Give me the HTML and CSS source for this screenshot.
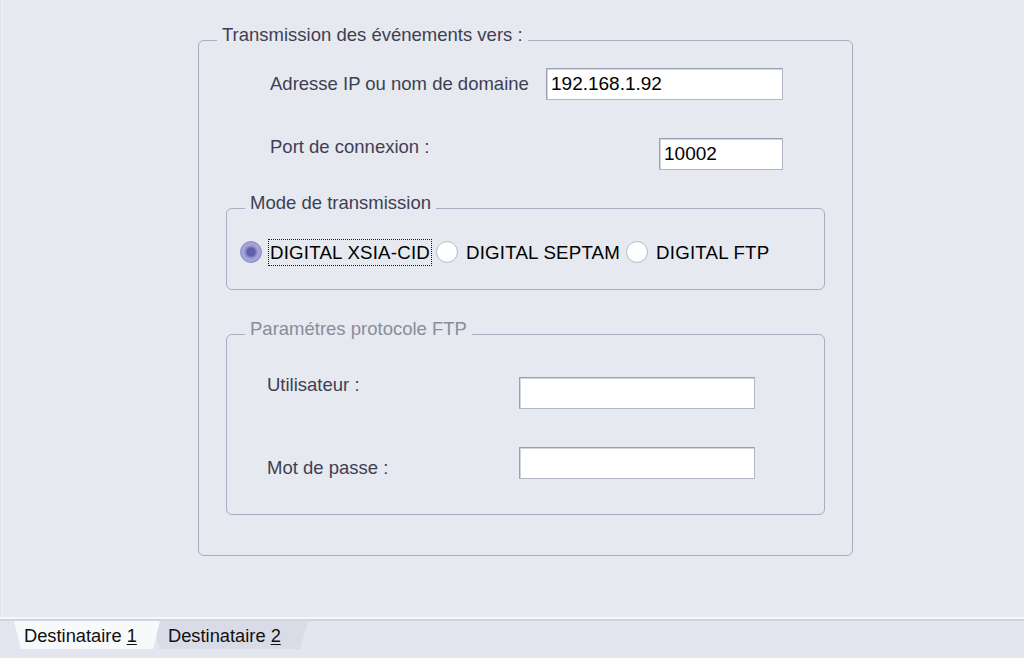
FILE: index.html
```html
<!DOCTYPE html>
<html lang="fr">
<head>
<meta charset="utf-8">
<title>Transmission</title>
<link rel="stylesheet" href="styles.css">
</head>
<body>
<div class="main">
  <fieldset class="group outer">
    <legend>Transmission des événements vers :</legend>
    <div class="row row-ip">
      <span class="label">Adresse IP ou nom de domaine</span>
      <input class="input wide" type="text" value="192.168.1.92">
    </div>
    <div class="row row-port">
      <span class="label lift">Port de connexion :</span>
      <input class="input narrow" type="text" value="10002">
    </div>

    <fieldset class="group mode">
      <legend>Mode de transmission</legend>
      <div class="radios">
        <span class="radio checked"></span><span class="rlabel focus">DIGITAL XSIA-CID</span>
        <span class="radio"></span><span class="rlabel">DIGITAL SEPTAM</span>
        <span class="radio"></span><span class="rlabel">DIGITAL FTP</span>
      </div>
    </fieldset>

    <fieldset class="group ftp">
      <legend class="disabled">Paramétres protocole FTP</legend>
      <div class="row row-user">
        <span class="label user-label">Utilisateur :</span>
        <input class="input ftp-input" type="text" value="">
      </div>
      <div class="row row-pass">
        <span class="label pass-label">Mot de passe :</span>
        <input class="input ftp-input" type="text" value="">
      </div>
    </fieldset>
  </fieldset>
</div>
<div class="tabbar">
  <div class="tab active">Destinataire <u>1</u></div>
  <div class="tab">Destinataire <u>2</u></div>
</div>
</body>
</html>
```

FILE: styles.css
```css
html, body {
  margin: 0;
  padding: 0;
}
body {
  width: 1024px;
  height: 658px;
  overflow: hidden;
  background: #e6e9ef;
  font-family: "Liberation Sans", Arial, sans-serif;
  font-size: 18.5px;
  color: #3e3f54;
}
.main {
  height: 617px;
  box-sizing: border-box;
  padding-top: 25px;
  padding-left: 198px;
  box-shadow: inset 2px 0 0 #e3e6ec, inset 3px 0 0 #f1f3f7;
}
.group {
  margin: 0;
  padding: 0;
  min-width: 0;
  border: 1px solid #a8acc0;
  border-radius: 6px;
}
.group legend {
  margin-left: 18px;
  padding: 0 5px 10px;
  line-height: 20px;
  color: #3e3f54;
}
.group legend.disabled {
  color: #8b8c9c;
}
.outer {
  width: 655px;
  box-sizing: border-box;
  padding-bottom: 40px;
}
.row {
  display: flex;
  align-items: center;
  height: 32px;
}
.row-ip {
  margin-top: 13px;
  padding-left: 71px;
  padding-right: 69px;
}
.row-port {
  margin-top: 38px;
  padding-left: 71px;
  padding-right: 69px;
  align-items: flex-start;
}
.label {
  line-height: 20px;
  white-space: nowrap;
}
.lift {
  margin-top: -1px;
}
.input {
  margin-left: auto;
  height: 32px;
  box-sizing: border-box;
  background: #fff;
  border: 1px solid #9da0b4;
  border-right-color: #b3b6c6;
  border-bottom-color: #b3b6c6;
  box-shadow: inset 1px 1px 0 #d2d4de;
  padding: 0 4px;
  font-family: "Liberation Sans", Arial, sans-serif;
  font-size: 19px;
  color: #000;
  outline: none;
}
.wide {
  width: 237px;
}
.narrow {
  width: 124px;
}
.ftp-input {
  width: 236px;
}
.mode {
  margin: 23px 27px 0;
  padding-bottom: 23px;
}
.radios {
  margin-top: 15px;
  padding-left: 13px;
  display: flex;
  align-items: center;
  height: 28px;
}
.radio {
  width: 22px;
  height: 22px;
  box-sizing: border-box;
  border-radius: 50%;
  border: 1px solid #b9bccd;
  background: radial-gradient(circle at 50% 45%, #ffffff 55%, #eef0f5 100%);
  margin-right: 6px;
  flex: none;
}
.radio.checked {
  border-color: #8d8dc4;
  background: radial-gradient(circle, #5f5fae 0 4px, #7c7cc0 5px, #a4a4d8 7px, #9c9cd2 100%);
}
.rlabel {
  line-height: 25px;
  padding: 0 1px;
  border: 1px dotted transparent;
  margin-right: 4px;
  color: #000;
  font-size: 18.7px;
  letter-spacing: 0.2px;
  white-space: nowrap;
}
.rlabel.focus {
  border-color: #1a1a1a;
}
.ftp {
  margin: 29px 27px 0;
  padding-bottom: 35px;
}
.row-user {
  margin-top: 28px;
  padding-left: 40px;
  padding-right: 69px;
  align-items: flex-start;
}
.row-pass {
  margin-top: 38px;
  padding-left: 40px;
  padding-right: 69px;
  align-items: flex-start;
}
.user-label {
  margin-top: -2px;
}
.pass-label {
  margin-top: 11px;
}
.tabbar {
  height: 41px;
  box-sizing: border-box;
  border-top: 2px solid #f5f7fa;
  box-shadow: inset 0 2px 0 #d0d4df;
  background: #e3e6ee;
  display: flex;
  align-items: flex-start;
  padding-left: 14px;
  padding-top: 2px;
}
.tab {
  height: 28px;
  line-height: 30px;
  color: #111;
  font-size: 18.3px;
  white-space: nowrap;
  flex: none;
}
.tab u {
  text-underline-offset: 2px;
}
.tab.active {
  width: 146px;
  padding-left: 10px;
  box-sizing: border-box;
  background: #f8f9fb;
  clip-path: polygon(0 0, 100% 0, calc(100% - 7px) 100%, 7px 100%);
  position: relative;
  z-index: 1;
}
.tab:not(.active) {
  width: 156px;
  margin-left: -8px;
  padding-left: 16px;
  box-sizing: border-box;
  background: #d9dce7;
  clip-path: polygon(0 0, 100% 0, calc(100% - 8px) 100%, 8px 100%);
}
```
